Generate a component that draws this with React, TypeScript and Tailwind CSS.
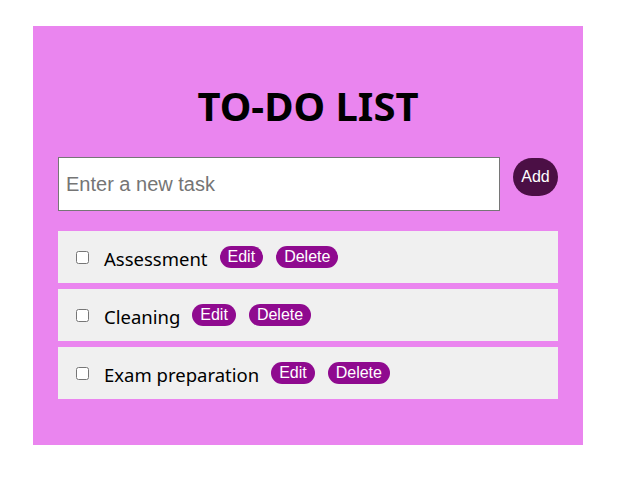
const tasks = ["Assessment", "Cleaning", "Exam preparation"];

const App = () => {
  return (
    <div className="pt-[26px] pl-[33px]">
      <div className="w-[550px] h-[419px] bg-[#ea85ef] px-[25px] pt-[56px]">
        <h1 className="text-center text-[40px] leading-[48px] font-bold text-black font-['Noto_Sans',sans-serif]">
          TO-DO LIST
        </h1>
        <div className="flex items-start gap-[13px] mt-[27px]">
          <input
            type="text"
            placeholder="Enter a new task"
            className="w-[442px] h-[54px] bg-white border border-[#767676] px-[7px] text-[20px] font-['Liberation_Sans',sans-serif] placeholder:text-[#757575] outline-none"
          />
          <button className="w-[45px] h-[38px] mt-px rounded-[19px] bg-[#4b0f45] text-white text-[16px] font-['Liberation_Sans',sans-serif]">
            Add
          </button>
        </div>
        <ul className="mt-[20px] flex flex-col gap-[6px]">
          {tasks.map((task, index) => (
            <li
              key={index}
              className="h-[52px] bg-[#f0f0f0] flex items-center pl-[18px]"
            >
              <input type="checkbox" className="m-0 w-[13px] h-[13px]" />
              <span className="ml-[15px] mt-[3px] text-[18.5px] text-black font-['Noto_Sans',sans-serif]">
                {task}
              </span>
              <button className="ml-[12px] h-[22px] px-[8px] rounded-[11px] bg-[#8f0a8f] text-white text-[16px] leading-[20px] font-['Liberation_Sans',sans-serif]">
                Edit
              </button>
              <button className="ml-[13px] h-[22px] px-[8px] rounded-[11px] bg-[#8f0a8f] text-white text-[16px] leading-[20px] font-['Liberation_Sans',sans-serif]">
                Delete
              </button>
            </li>
          ))}
        </ul>
      </div>
    </div>
  );
};

export default App;
